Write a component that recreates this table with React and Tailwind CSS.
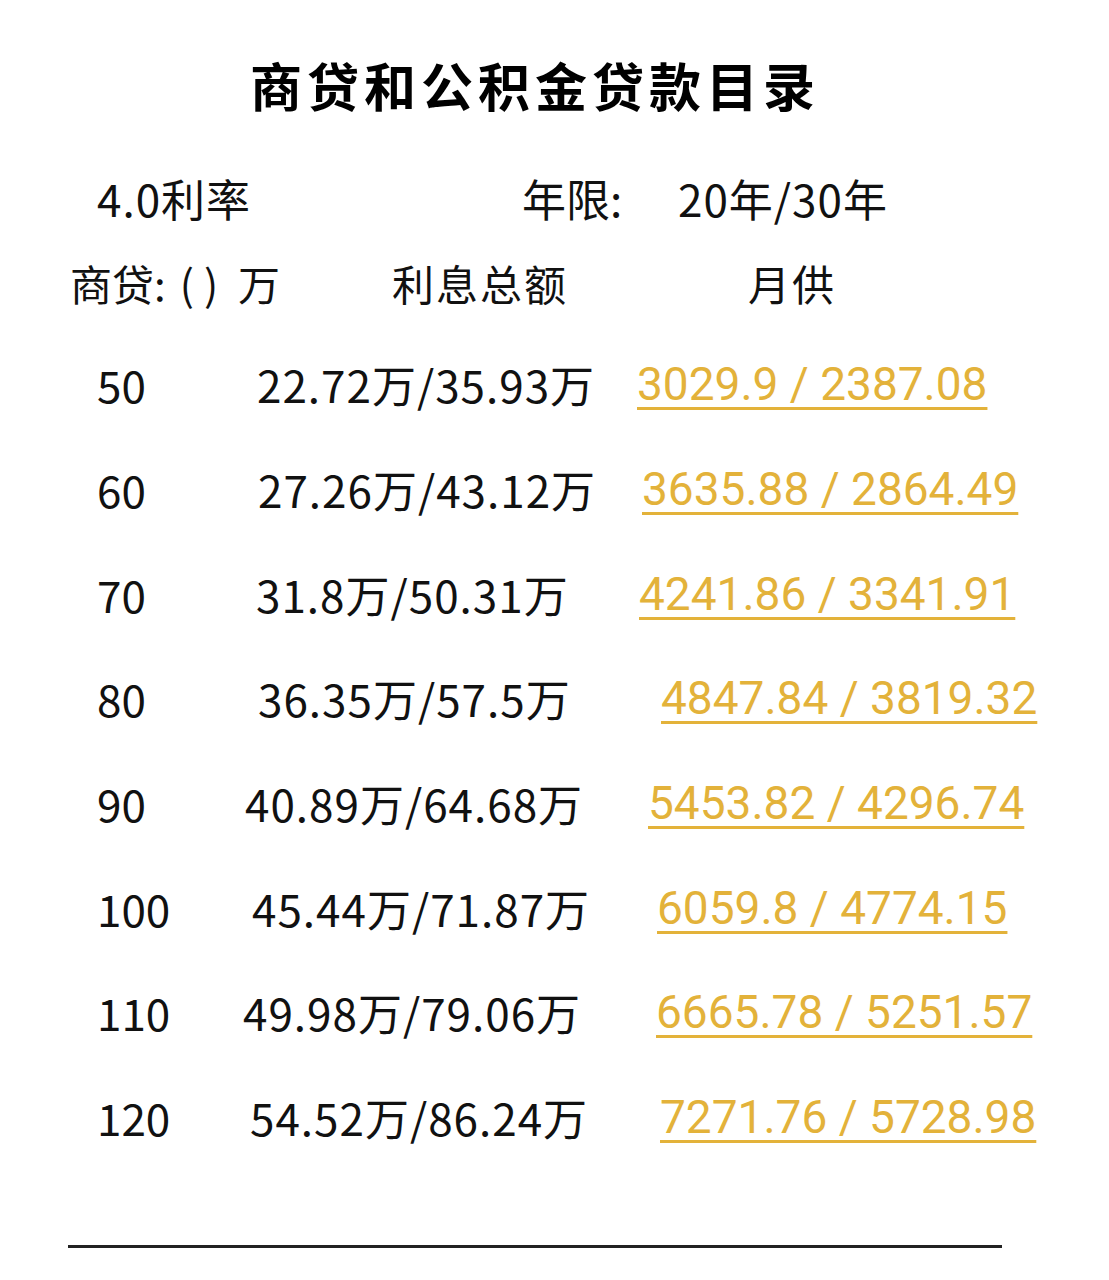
import React from 'react';

const rows = [
    { amount: '50', interest: '22.72万/35.93万', monthly: '3029.9 / 2387.08', o2: 'ml-[14px]', o3: 'ml-[0px]' },
    { amount: '60', interest: '27.26万/43.12万', monthly: '3635.88 / 2864.49', o2: 'ml-[15px]', o3: 'ml-[5px]' },
    { amount: '70', interest: '31.8万/50.31万', monthly: '4241.86 / 3341.91', o2: 'ml-[13px]', o3: 'ml-[2px]' },
    { amount: '80', interest: '36.35万/57.5万', monthly: '4847.84 / 3819.32', o2: 'ml-[15px]', o3: 'ml-[24px]' },
    { amount: '90', interest: '40.89万/64.68万', monthly: '5453.82 / 4296.74', o2: 'ml-[2px]', o3: 'ml-[11px]' },
    { amount: '100', interest: '45.44万/71.87万', monthly: '6059.8 / 4774.15', o2: 'ml-[9px]', o3: 'ml-[20px]' },
    { amount: '110', interest: '49.98万/79.06万', monthly: '6665.78 / 5251.57', o2: 'ml-[0px]', o3: 'ml-[19px]' },
    { amount: '120', interest: '54.52万/86.24万', monthly: '7271.76 / 5728.98', o2: 'ml-[7px]', o3: 'ml-[23px]' },
];

const App = () => {
    return (
        <div className="w-[1109px] h-[1280px] bg-white text-[#111] font-['Noto_Sans_CJK_SC',sans-serif] overflow-hidden">
            {/* Title */}
            <div className="pt-[55px] h-[115px] flex">
                <h1 className="ml-[250px] text-[52px] leading-[60px] font-bold tracking-[5px] text-black whitespace-nowrap">
                    商贷和公积金贷款目录
                </h1>
            </div>

            {/* Rate / term */}
            <div className="mt-[58px] h-[50px] flex items-center text-[44px] leading-[50px]">
                <span className="ml-[97px] w-[425px] tracking-[1px]">4.0利率</span>
                <span className="w-[156px]">年限:</span>
                <span className="tracking-[1px]">20年/30年</span>
            </div>

            {/* Column headers */}
            <div className="mt-[35px] h-[50px] flex items-center text-[42px] leading-[50px]">
                <span className="ml-[70px] w-[322px] flex items-center whitespace-nowrap">
                    <span>商贷:</span>
                    <span className="ml-[14px]">(</span>
                    <span className="ml-[10px]">)</span>
                    <span className="ml-[20px]">万</span>
                </span>
                <span className="w-[356px] tracking-[2px]">利息总额</span>
                <span className="tracking-[2px]">月供</span>
            </div>

            {/* Rows */}
            <div className="mt-[24px]">
                {rows.map((r) => (
                    <div key={r.amount} className="grid grid-cols-[243px_394px_1fr] items-center h-[104.7px] text-[44px]">
                        <span className="pl-[97px] leading-none">{r.amount}</span>
                        <span className={`${r.o2} leading-none whitespace-nowrap tracking-[1px]`}>{r.interest}</span>
                        <span
                            className={`${r.o3} leading-none whitespace-nowrap text-[46px] text-[#e3b23a] font-['Roboto',sans-serif] underline decoration-[2.5px] underline-offset-[7px]`}
                        >
                            {r.monthly}
                        </span>
                    </div>
                ))}
            </div>

            {/* Bottom rule */}
            <div className="mt-[75px] ml-[68px] w-[934px] h-[3px] bg-[#222]"></div>
        </div>
    );
};

export default App;
